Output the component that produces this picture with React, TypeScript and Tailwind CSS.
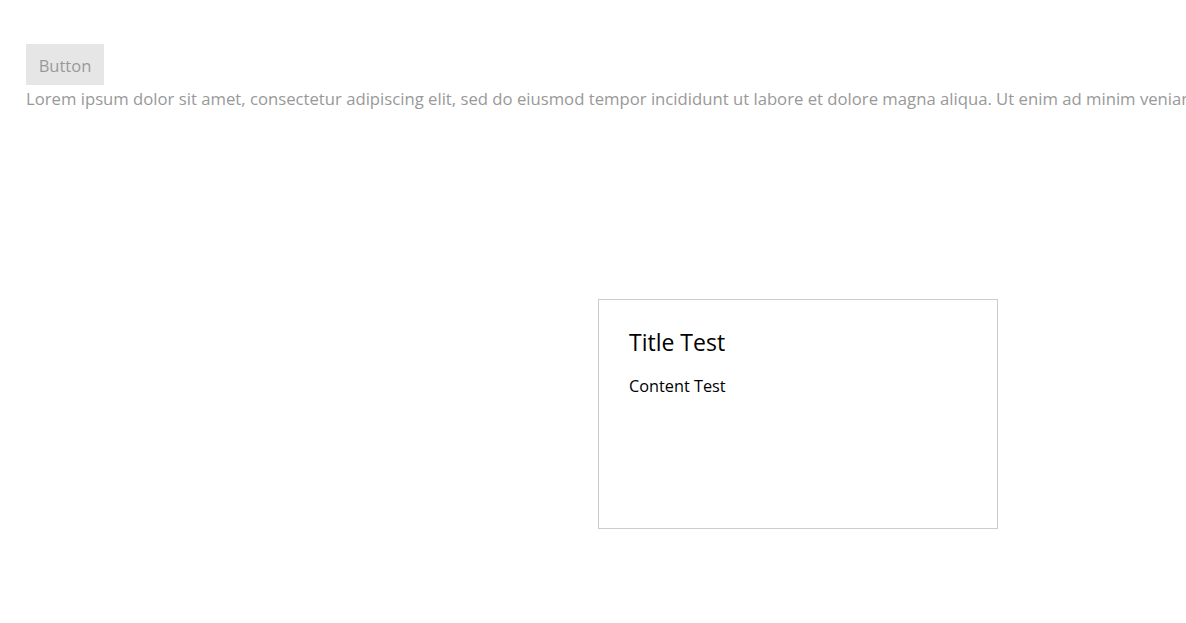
import React from 'react';

const LOREM =
  'Lorem ipsum dolor sit amet, consectetur adipiscing elit, sed do eiusmod tempor incididunt ut labore et dolore magna aliqua. Ut enim ad minim veniam';

const App: React.FC = () => {
  return (
    <div className="w-[1186px] h-[623px] overflow-hidden bg-white font-['Open_Sans',sans-serif]">
      {/* Top controls */}
      <div className="pt-[44px] pl-[26px] flex flex-col items-start">
        <button
          disabled
          className="h-[41px] w-[78px] bg-[#e6e6e6] text-[#999999] text-[16.5px] leading-none pt-[3px]"
        >
          Button
        </button>
        <p className="mt-[2px] whitespace-nowrap text-[#999999] text-[16.7px] leading-[24px]">{LOREM}</p>
      </div>

      {/* Card */}
      <div className="ml-[598px] mt-[188px] w-[400px] h-[230px] border border-[#cccccc] pt-[26px] px-[30px]">
        <h2 className="text-[23px] leading-[32px] text-black">Title Test</h2>
        <p className="mt-[17px] text-[16.3px] leading-[22px] text-black">Content Test</p>
      </div>
    </div>
  );
};

export default App;
